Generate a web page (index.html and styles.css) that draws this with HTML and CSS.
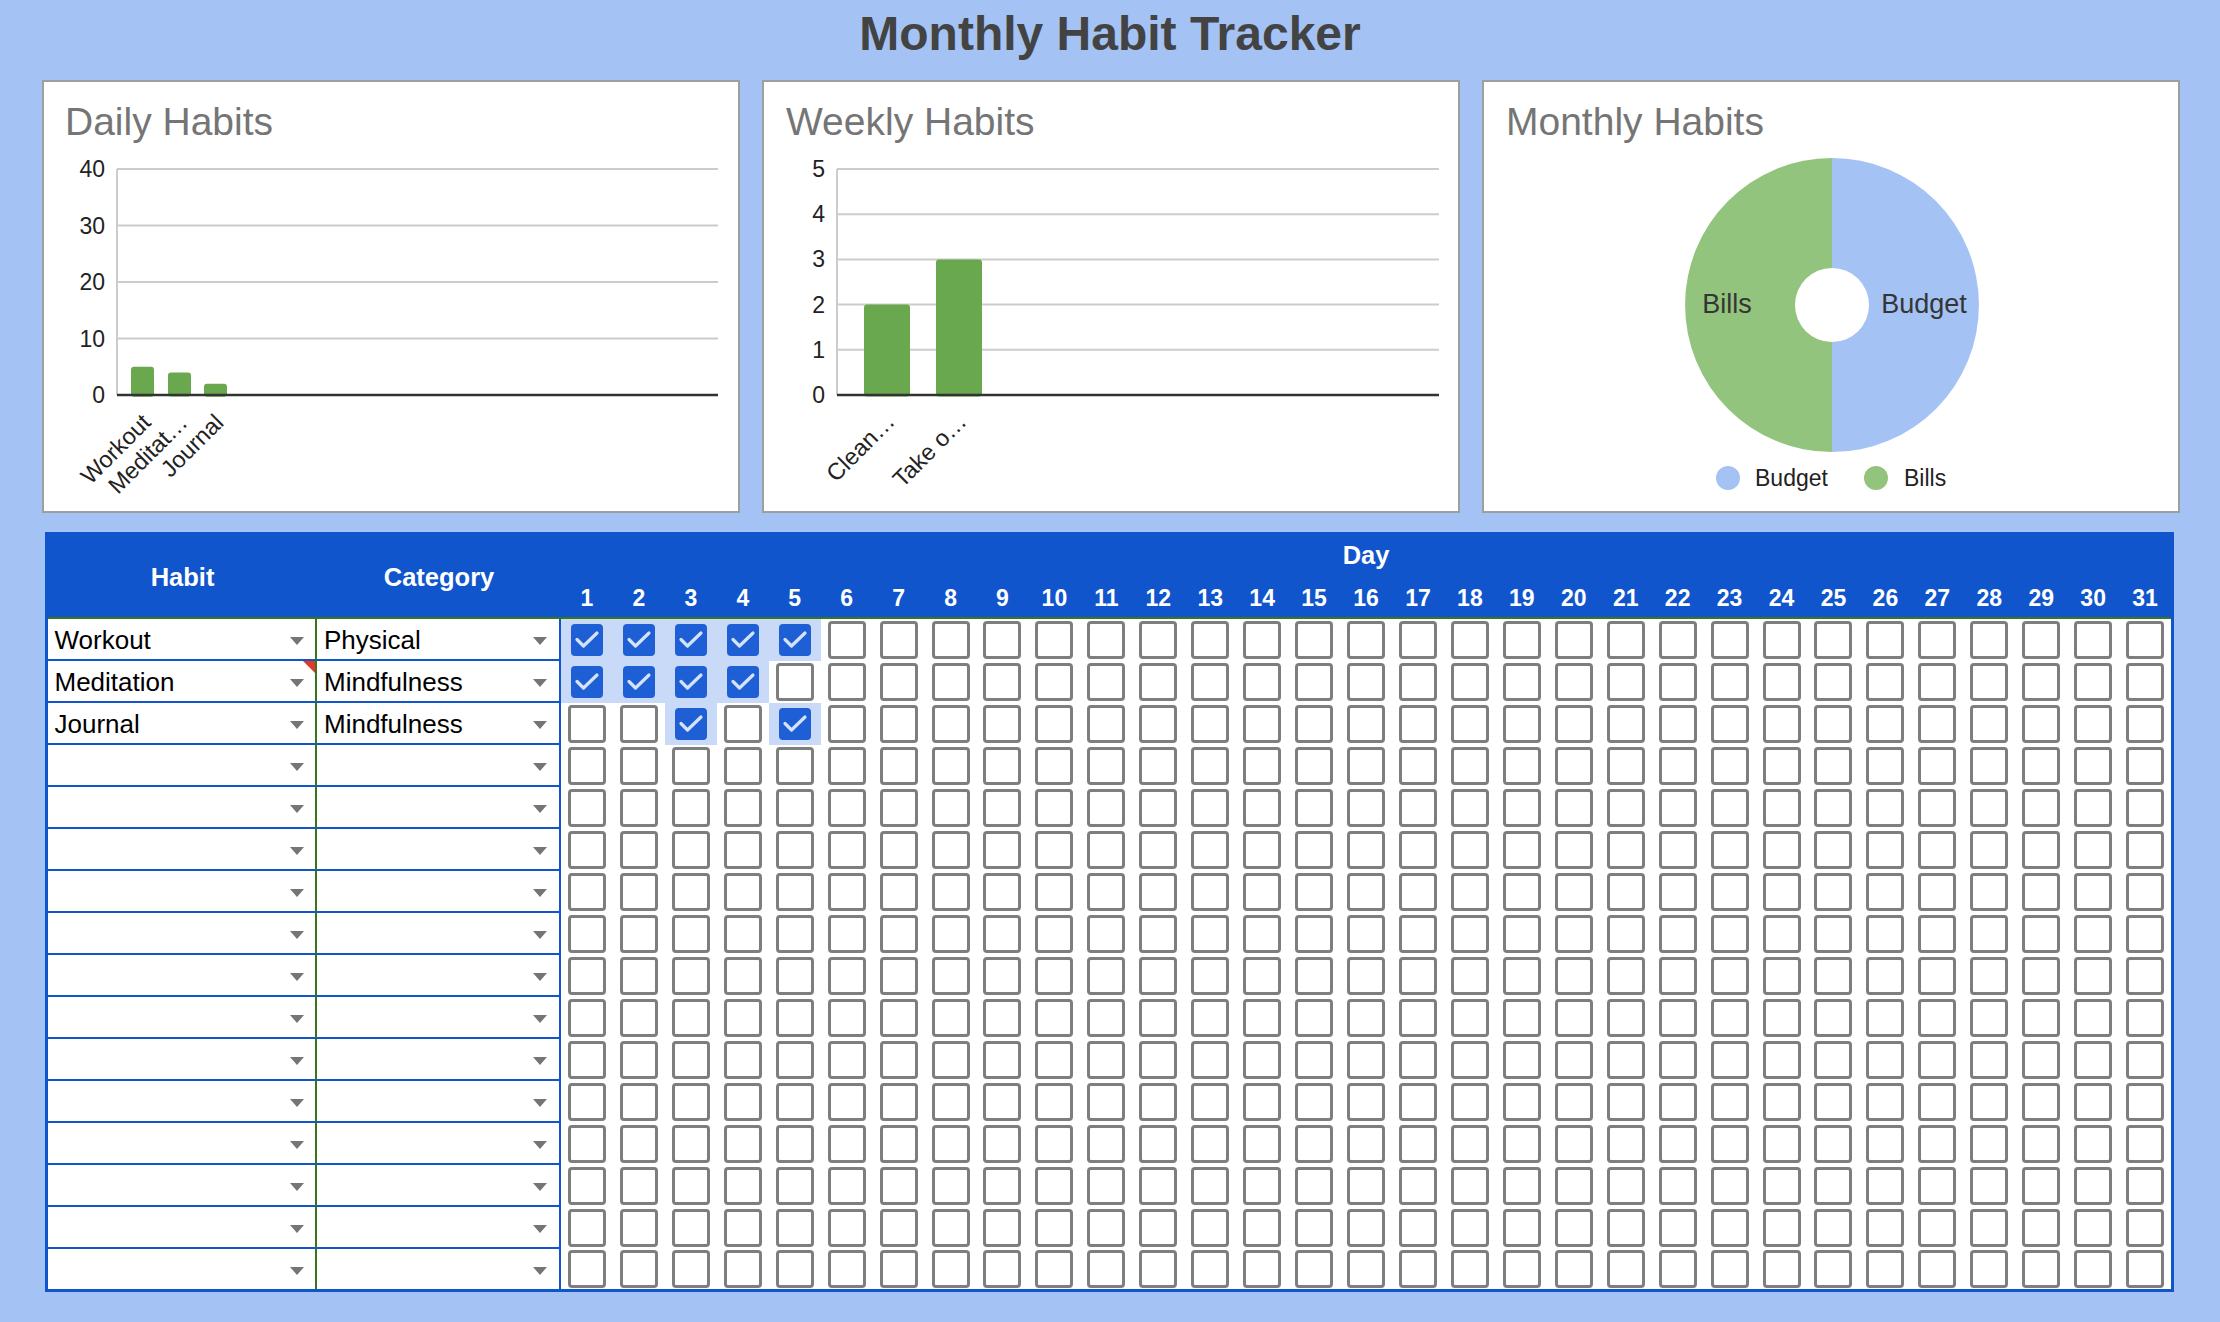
FILE: index.html
```html
<!DOCTYPE html>
<html lang="en">
<head>
<meta charset="utf-8">
<title>Monthly Habit Tracker</title>
<link rel="stylesheet" href="styles.css">
</head>
<body>
<h1 class="title">Monthly Habit Tracker</h1>

<div class="charts">
  <div class="card">
    <svg viewBox="0 0 694 429">
      <text x="21" y="53" class="ct">Daily Habits</text>
      <g class="grid">
        <line x1="73" x2="674" y1="87" y2="87"/>
        <line x1="73" x2="674" y1="143.5" y2="143.5"/>
        <line x1="73" x2="674" y1="200" y2="200"/>
        <line x1="73" x2="674" y1="256.5" y2="256.5"/>
        <line x1="73" x2="73" y1="87" y2="313"/>
      </g>
      <text class="yl" x="61" y="95">40</text>
      <text class="yl" x="61" y="151.5">30</text>
      <text class="yl" x="61" y="208">20</text>
      <text class="yl" x="61" y="264.5">10</text>
      <text class="yl" x="61" y="321">0</text>
      <rect class="bar" x="87" y="284.75" width="23" height="30" rx="3"/>
      <rect class="bar" x="124" y="290.4" width="23" height="24" rx="3"/>
      <rect class="bar" x="160" y="301.7" width="23" height="13" rx="3"/>
      <line class="axis" x1="73" x2="674" y1="313" y2="313"/>
      <text class="xl" x="108" y="342" transform="rotate(-45 108 342)">Workout</text>
      <text class="xl" x="145" y="342" transform="rotate(-45 145 342)">Meditat…</text>
      <text class="xl" x="181" y="342" transform="rotate(-45 181 342)">Journal</text>
    </svg>
  </div>
  <div class="card">
    <svg viewBox="0 0 694 429">
      <text x="22" y="53" class="ct">Weekly Habits</text>
      <g class="grid">
        <line x1="73" x2="675" y1="87" y2="87"/>
        <line x1="73" x2="675" y1="132.2" y2="132.2"/>
        <line x1="73" x2="675" y1="177.4" y2="177.4"/>
        <line x1="73" x2="675" y1="222.6" y2="222.6"/>
        <line x1="73" x2="675" y1="267.8" y2="267.8"/>
        <line x1="73" x2="73" y1="87" y2="313"/>
      </g>
      <text class="yl" x="61" y="95">5</text>
      <text class="yl" x="61" y="140.2">4</text>
      <text class="yl" x="61" y="185.4">3</text>
      <text class="yl" x="61" y="230.6">2</text>
      <text class="yl" x="61" y="275.8">1</text>
      <text class="yl" x="61" y="321">0</text>
      <rect class="bar" x="100" y="222.6" width="46" height="92" rx="3"/>
      <rect class="bar" x="172" y="177.4" width="46" height="137" rx="3"/>
      <line class="axis" x1="73" x2="675" y1="313" y2="313"/>
      <text class="xl" x="132" y="341" transform="rotate(-45 132 341)">Clean…</text>
      <text class="xl" x="204" y="341" transform="rotate(-45 204 341)">Take o…</text>
    </svg>
  </div>
  <div class="card">
    <svg viewBox="0 0 694 429">
      <text x="22" y="53" class="ct">Monthly Habits</text>
      <path class="s-budget" d="M348 76 A147 147 0 0 1 348 370 Z"/>
      <path class="s-bills" d="M348 370 A147 147 0 0 1 348 76 Z"/>
      <circle cx="348" cy="223" r="37" fill="#ffffff"/>
      <text class="pl" x="243" y="231">Bills</text>
      <text class="pl" x="440" y="231">Budget</text>
      <circle class="s-budget" cx="244" cy="396" r="12"/>
      <text class="lg" x="271" y="404">Budget</text>
      <circle class="s-bills" cx="392" cy="396" r="12"/>
      <text class="lg" x="420" y="404">Bills</text>
    </svg>
  </div>
</div>

<div class="table">
  <div class="thead">
    <div class="h">Habit</div>
    <div class="h">Category</div>
    <div class="day">Day</div>
    <span class="n">1</span><span class="n">2</span><span class="n">3</span><span class="n">4</span><span class="n">5</span><span class="n">6</span><span class="n">7</span><span class="n">8</span><span class="n">9</span><span class="n">10</span>
    <span class="n">11</span><span class="n">12</span><span class="n">13</span><span class="n">14</span><span class="n">15</span><span class="n">16</span><span class="n">17</span><span class="n">18</span><span class="n">19</span><span class="n">20</span>
    <span class="n">21</span><span class="n">22</span><span class="n">23</span><span class="n">24</span><span class="n">25</span><span class="n">26</span><span class="n">27</span><span class="n">28</span><span class="n">29</span><span class="n">30</span>
    <span class="n">31</span>
  </div>

  <div class="row">
    <div class="hc">Workout<b class="dd"></b></div><div class="cc">Physical<b class="dd"></b></div>
    <i class="on"><svg viewBox="0 0 32 32"><rect width="32" height="32" rx="4"/><path d="M6 15.5l6.5 6.5 13.5-13"/></svg></i><i class="on"><svg viewBox="0 0 32 32"><rect width="32" height="32" rx="4"/><path d="M6 15.5l6.5 6.5 13.5-13"/></svg></i><i class="on"><svg viewBox="0 0 32 32"><rect width="32" height="32" rx="4"/><path d="M6 15.5l6.5 6.5 13.5-13"/></svg></i><i class="on"><svg viewBox="0 0 32 32"><rect width="32" height="32" rx="4"/><path d="M6 15.5l6.5 6.5 13.5-13"/></svg></i><i class="on"><svg viewBox="0 0 32 32"><rect width="32" height="32" rx="4"/><path d="M6 15.5l6.5 6.5 13.5-13"/></svg></i>
    <i></i><i></i><i></i><i></i><i></i>
    <i></i><i></i><i></i><i></i><i></i><i></i><i></i><i></i><i></i><i></i>
    <i></i><i></i><i></i><i></i><i></i><i></i><i></i><i></i><i></i><i></i>
    <i></i>
  </div>
  <div class="row">
    <div class="hc note">Meditation<b class="dd"></b></div><div class="cc">Mindfulness<b class="dd"></b></div>
    <i class="on"><svg viewBox="0 0 32 32"><rect width="32" height="32" rx="4"/><path d="M6 15.5l6.5 6.5 13.5-13"/></svg></i><i class="on"><svg viewBox="0 0 32 32"><rect width="32" height="32" rx="4"/><path d="M6 15.5l6.5 6.5 13.5-13"/></svg></i><i class="on"><svg viewBox="0 0 32 32"><rect width="32" height="32" rx="4"/><path d="M6 15.5l6.5 6.5 13.5-13"/></svg></i><i class="on"><svg viewBox="0 0 32 32"><rect width="32" height="32" rx="4"/><path d="M6 15.5l6.5 6.5 13.5-13"/></svg></i>
    <i></i><i></i><i></i><i></i><i></i><i></i>
    <i></i><i></i><i></i><i></i><i></i><i></i><i></i><i></i><i></i><i></i>
    <i></i><i></i><i></i><i></i><i></i><i></i><i></i><i></i><i></i><i></i>
    <i></i>
  </div>
  <div class="row">
    <div class="hc">Journal<b class="dd"></b></div><div class="cc">Mindfulness<b class="dd"></b></div>
    <i></i><i></i><i class="on"><svg viewBox="0 0 32 32"><rect width="32" height="32" rx="4"/><path d="M6 15.5l6.5 6.5 13.5-13"/></svg></i><i></i><i class="on"><svg viewBox="0 0 32 32"><rect width="32" height="32" rx="4"/><path d="M6 15.5l6.5 6.5 13.5-13"/></svg></i>
    <i></i><i></i><i></i><i></i><i></i>
    <i></i><i></i><i></i><i></i><i></i><i></i><i></i><i></i><i></i><i></i>
    <i></i><i></i><i></i><i></i><i></i><i></i><i></i><i></i><i></i><i></i>
    <i></i>
  </div>
  <!-- empty row 4 -->
  <div class="row"><div class="hc"><b class="dd"></b></div><div class="cc"><b class="dd"></b></div><i></i><i></i><i></i><i></i><i></i><i></i><i></i><i></i><i></i><i></i><i></i><i></i><i></i><i></i><i></i><i></i><i></i><i></i><i></i><i></i><i></i><i></i><i></i><i></i><i></i><i></i><i></i><i></i><i></i><i></i><i></i></div>
  <!-- empty row 5 -->
  <div class="row"><div class="hc"><b class="dd"></b></div><div class="cc"><b class="dd"></b></div><i></i><i></i><i></i><i></i><i></i><i></i><i></i><i></i><i></i><i></i><i></i><i></i><i></i><i></i><i></i><i></i><i></i><i></i><i></i><i></i><i></i><i></i><i></i><i></i><i></i><i></i><i></i><i></i><i></i><i></i><i></i></div>
  <!-- empty row 6 -->
  <div class="row"><div class="hc"><b class="dd"></b></div><div class="cc"><b class="dd"></b></div><i></i><i></i><i></i><i></i><i></i><i></i><i></i><i></i><i></i><i></i><i></i><i></i><i></i><i></i><i></i><i></i><i></i><i></i><i></i><i></i><i></i><i></i><i></i><i></i><i></i><i></i><i></i><i></i><i></i><i></i><i></i></div>
  <!-- empty row 7 -->
  <div class="row"><div class="hc"><b class="dd"></b></div><div class="cc"><b class="dd"></b></div><i></i><i></i><i></i><i></i><i></i><i></i><i></i><i></i><i></i><i></i><i></i><i></i><i></i><i></i><i></i><i></i><i></i><i></i><i></i><i></i><i></i><i></i><i></i><i></i><i></i><i></i><i></i><i></i><i></i><i></i><i></i></div>
  <!-- empty row 8 -->
  <div class="row"><div class="hc"><b class="dd"></b></div><div class="cc"><b class="dd"></b></div><i></i><i></i><i></i><i></i><i></i><i></i><i></i><i></i><i></i><i></i><i></i><i></i><i></i><i></i><i></i><i></i><i></i><i></i><i></i><i></i><i></i><i></i><i></i><i></i><i></i><i></i><i></i><i></i><i></i><i></i><i></i></div>
  <!-- empty row 9 -->
  <div class="row"><div class="hc"><b class="dd"></b></div><div class="cc"><b class="dd"></b></div><i></i><i></i><i></i><i></i><i></i><i></i><i></i><i></i><i></i><i></i><i></i><i></i><i></i><i></i><i></i><i></i><i></i><i></i><i></i><i></i><i></i><i></i><i></i><i></i><i></i><i></i><i></i><i></i><i></i><i></i><i></i></div>
  <!-- empty row 10 -->
  <div class="row"><div class="hc"><b class="dd"></b></div><div class="cc"><b class="dd"></b></div><i></i><i></i><i></i><i></i><i></i><i></i><i></i><i></i><i></i><i></i><i></i><i></i><i></i><i></i><i></i><i></i><i></i><i></i><i></i><i></i><i></i><i></i><i></i><i></i><i></i><i></i><i></i><i></i><i></i><i></i><i></i></div>
  <!-- empty row 11 -->
  <div class="row"><div class="hc"><b class="dd"></b></div><div class="cc"><b class="dd"></b></div><i></i><i></i><i></i><i></i><i></i><i></i><i></i><i></i><i></i><i></i><i></i><i></i><i></i><i></i><i></i><i></i><i></i><i></i><i></i><i></i><i></i><i></i><i></i><i></i><i></i><i></i><i></i><i></i><i></i><i></i><i></i></div>
  <!-- empty row 12 -->
  <div class="row"><div class="hc"><b class="dd"></b></div><div class="cc"><b class="dd"></b></div><i></i><i></i><i></i><i></i><i></i><i></i><i></i><i></i><i></i><i></i><i></i><i></i><i></i><i></i><i></i><i></i><i></i><i></i><i></i><i></i><i></i><i></i><i></i><i></i><i></i><i></i><i></i><i></i><i></i><i></i><i></i></div>
  <!-- empty row 13 -->
  <div class="row"><div class="hc"><b class="dd"></b></div><div class="cc"><b class="dd"></b></div><i></i><i></i><i></i><i></i><i></i><i></i><i></i><i></i><i></i><i></i><i></i><i></i><i></i><i></i><i></i><i></i><i></i><i></i><i></i><i></i><i></i><i></i><i></i><i></i><i></i><i></i><i></i><i></i><i></i><i></i><i></i></div>
  <!-- empty row 14 -->
  <div class="row"><div class="hc"><b class="dd"></b></div><div class="cc"><b class="dd"></b></div><i></i><i></i><i></i><i></i><i></i><i></i><i></i><i></i><i></i><i></i><i></i><i></i><i></i><i></i><i></i><i></i><i></i><i></i><i></i><i></i><i></i><i></i><i></i><i></i><i></i><i></i><i></i><i></i><i></i><i></i><i></i></div>
  <!-- empty row 15 -->
  <div class="row"><div class="hc"><b class="dd"></b></div><div class="cc"><b class="dd"></b></div><i></i><i></i><i></i><i></i><i></i><i></i><i></i><i></i><i></i><i></i><i></i><i></i><i></i><i></i><i></i><i></i><i></i><i></i><i></i><i></i><i></i><i></i><i></i><i></i><i></i><i></i><i></i><i></i><i></i><i></i><i></i></div>
  <!-- empty row 16 -->
  <div class="row"><div class="hc"><b class="dd"></b></div><div class="cc"><b class="dd"></b></div><i></i><i></i><i></i><i></i><i></i><i></i><i></i><i></i><i></i><i></i><i></i><i></i><i></i><i></i><i></i><i></i><i></i><i></i><i></i><i></i><i></i><i></i><i></i><i></i><i></i><i></i><i></i><i></i><i></i><i></i><i></i></div>
</div>
</body>
</html>
```

FILE: styles.css
```css
* { box-sizing: border-box; }

body {
  margin: 0;
  background: #a4c2f4;
  font-family: "Liberation Sans", Arial, sans-serif;
  overflow: hidden;
}

.title {
  margin: 0;
  height: 80px;
  line-height: 67px;
  text-align: center;
  font-size: 48px;
  font-weight: bold;
  color: #434343;
}

/* charts */
.charts {
  display: flex;
  gap: 22px;
  padding-left: 42px;
}

.card {
  width: 698px;
  height: 433px;
  background: #ffffff;
  border: 2px solid #9e9e9e;
}

.card svg {
  display: block;
  width: 694px;
  height: 429px;
  font-family: "Liberation Sans", Arial, sans-serif;
}

.ct { font-size: 39px; fill: #757575; }
.grid line { stroke: #cccccc; stroke-width: 2; }
.axis { stroke: #333333; stroke-width: 2.5; }
.yl { font-size: 23px; fill: #222222; text-anchor: end; }
.xl { font-size: 23.5px; fill: #222222; text-anchor: end; }
.bar { fill: #6aa84f; }
.s-budget { fill: #a4c2f4; }
.s-bills { fill: #93c47d; }
.pl { font-size: 27px; fill: #353535; text-anchor: middle; }
.lg { font-size: 23px; fill: #222222; }

/* table */
.table {
  margin: 19px 0 0 45px;
  width: fit-content;
  border: 3px solid #1155cc;
  border-top: 0;
  background: #ffffff;
}

.thead,
.row {
  display: grid;
  grid-template-columns: 269px 244px repeat(31, 51.95px);
}

.thead {
  grid-template-rows: 47px 38px;
  background: #1155cc;
  color: #ffffff;
  font-weight: bold;
  border-bottom: 2px solid #38761d;
}

.thead .h {
  grid-row: 1 / 3;
  display: flex;
  align-items: center;
  justify-content: center;
  font-size: 25.5px;
  padding-top: 5px;
}

.thead .day {
  grid-column: 3 / span 31;
  display: flex;
  align-items: center;
  justify-content: center;
  font-size: 25.5px;
}

.thead .n {
  display: flex;
  align-items: center;
  justify-content: center;
  font-size: 23px;
}

.row { height: 42px; }
.row:last-child { height: 40px; }

.hc,
.cc {
  position: relative;
  display: flex;
  align-items: center;
  padding: 3px 11.5px 0 6.5px;
  font-size: 26px;
  color: #000000;
  border-bottom: 2px solid #1155cc;
}

.hc { border-right: 2px solid #38761d; }
.cc { border-right: 2px solid #1155cc; padding-left: 7px; padding-right: 12px; }

.row:last-child .hc,
.row:last-child .cc { border-bottom: 0; }

.dd {
  margin-left: auto;
  width: 0;
  height: 0;
  border-left: 7.5px solid transparent;
  border-right: 7.5px solid transparent;
  border-top: 8px solid #757575;
}

.note::after {
  content: "";
  position: absolute;
  top: 0;
  right: 0;
  border-left: 12px solid transparent;
  border-top: 12px solid #e2382a;
}

.row i {
  display: flex;
  align-items: center;
  justify-content: center;
}

.row i::before {
  content: "";
  width: 32px;
  height: 32px;
  border: 3.8px solid #7e7e7e;
  border-radius: 4px;
}

.row i.on { background: #c9daf8; }
.row i.on::before { display: none; }

.row i.on svg {
  display: block;
  width: 32px;
  height: 32px;
}

.row i.on rect { fill: #1f5fd6; }

.row i.on path {
  fill: none;
  stroke: #d4e2fa;
  stroke-width: 3.2;
  stroke-linecap: round;
  stroke-linejoin: round;
}
```
